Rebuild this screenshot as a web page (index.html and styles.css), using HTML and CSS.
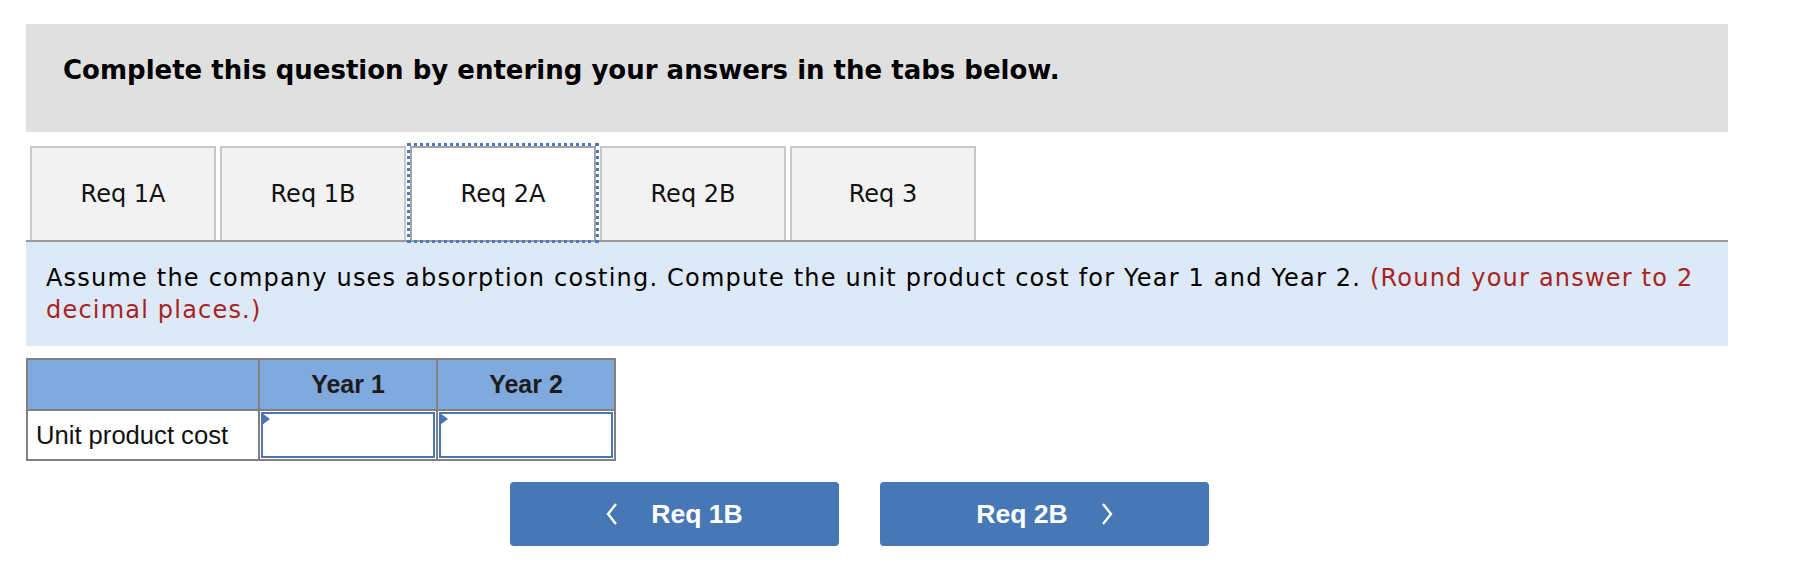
FILE: index.html
```html
<!DOCTYPE html>
<html lang="en">
<head>
<meta charset="utf-8">
<title>Req 2A</title>
<link rel="stylesheet" href="styles.css">
</head>
<body>
<div class="page">
  <div class="prompt">Complete this question by entering your answers in the tabs below.</div>

  <div class="tabs">
    <div class="tab">Req 1A</div>
    <div class="tab">Req 1B</div>
    <div class="tab active">Req 2A</div>
    <div class="tab">Req 2B</div>
    <div class="tab">Req 3</div>
  </div>

  <div class="panel">
    <p class="question">Assume the company uses absorption costing. Compute the unit product cost for Year 1 and Year 2. <span class="note">(Round your answer to 2 decimal places.)</span></p>
  </div>

  <table class="grid">
    <colgroup>
      <col class="c-label">
      <col class="c-year">
      <col class="c-year">
    </colgroup>
    <tr class="head">
      <th></th>
      <th>Year 1</th>
      <th>Year 2</th>
    </tr>
    <tr>
      <td class="label">Unit product cost</td>
      <td class="entry"><div class="inp"></div></td>
      <td class="entry"><div class="inp"></div></td>
    </tr>
  </table>

  <div class="nav">
    <button class="nav-btn">
      <svg class="chev" width="12" height="22" viewBox="0 0 12 22"><polyline points="10,1 2,11 10,21" fill="none" stroke="#fff" stroke-width="2.4"/></svg>
      <span>Req 1B</span>
    </button>
    <button class="nav-btn">
      <span>Req 2B</span>
      <svg class="chev" width="12" height="22" viewBox="0 0 12 22"><polyline points="2,1 10,11 2,21" fill="none" stroke="#fff" stroke-width="2.4"/></svg>
    </button>
  </div>
</div>
</body>
</html>
```

FILE: styles.css
```css
html, body {
  margin: 0;
  padding: 0;
  background: #ffffff;
}

.page {
  padding: 24px 0 0 26px;
  width: 1702px;
}

.prompt {
  box-sizing: border-box;
  height: 108px;
  padding: 31px 37px 0;
  background: #e0e0e0;
  font-family: "DejaVu Sans", Verdana, sans-serif;
  font-weight: bold;
  font-size: 26px;
  line-height: 30px;
  color: #000;
}

.tabs {
  display: flex;
  gap: 4px;
  margin-top: 14px;
  padding-left: 4px;
  height: 94px;
}

.tab {
  box-sizing: border-box;
  width: 186px;
  height: 94px;
  border: 2px solid #c9c9c9;
  border-bottom: 0;
  background: #f2f2f2;
  display: flex;
  align-items: center;
  justify-content: center;
  font-family: "DejaVu Sans", Verdana, sans-serif;
  font-size: 24px;
  color: #111;
}

.tab.active {
  background: #ffffff;
  border-color: #a3a3a3;
  outline: 3px dotted #4a7ac2;
  outline-offset: 0;
}

.panel {
  border-top: 2px solid #999999;
  background: #dde9f7;
  padding: 20px 20px;
}

.question {
  margin: 0;
  font-family: "DejaVu Sans", Verdana, sans-serif;
  font-size: 24px;
  letter-spacing: 1.2px;
  line-height: 32px;
  color: #000;
}

.note {
  color: #a8231f;
}

.grid {
  margin-top: 12px;
  border-collapse: collapse;
  font-family: "Liberation Sans", Arial, sans-serif;
  font-size: 25px;
}

.c-label { width: 232px; }
.c-year { width: 178px; }

.grid th,
.grid td {
  border: 2px solid #808080;
  padding: 0;
}

.grid .head th {
  height: 49px;
  background: #80a9de;
  font-weight: bold;
  color: #1c1c1c;
  text-align: center;
}

.grid .label {
  height: 48px;
  padding: 0 8px;
  font-size: 25.6px;
  color: #111;
  text-align: left;
}

.grid .entry {
  padding: 1px;
  position: relative;
}

.inp {
  box-sizing: border-box;
  height: 46px;
  border: 2px solid #4a76b3;
  background: #ffffff;
  position: relative;
}

.inp::before {
  content: "";
  position: absolute;
  top: -1px;
  left: -1px;
  border-left: 8px solid #4a76b3;
  border-top: 6px solid transparent;
  border-bottom: 6px solid transparent;
}

.nav {
  display: flex;
  justify-content: center;
  gap: 41px;
  margin-top: 21px;
  padding-right: 35px;
}

.nav-btn {
  box-sizing: border-box;
  width: 329px;
  height: 64px;
  border: 0;
  border-radius: 4px;
  background: #4777b4;
  color: #ffffff;
  display: flex;
  align-items: center;
  justify-content: center;
  gap: 33px;
  font-family: "Liberation Sans", Arial, sans-serif;
  font-weight: bold;
  font-size: 26.6px;
  padding: 0;
  cursor: pointer;
}

.chev {
  display: block;
}
```
